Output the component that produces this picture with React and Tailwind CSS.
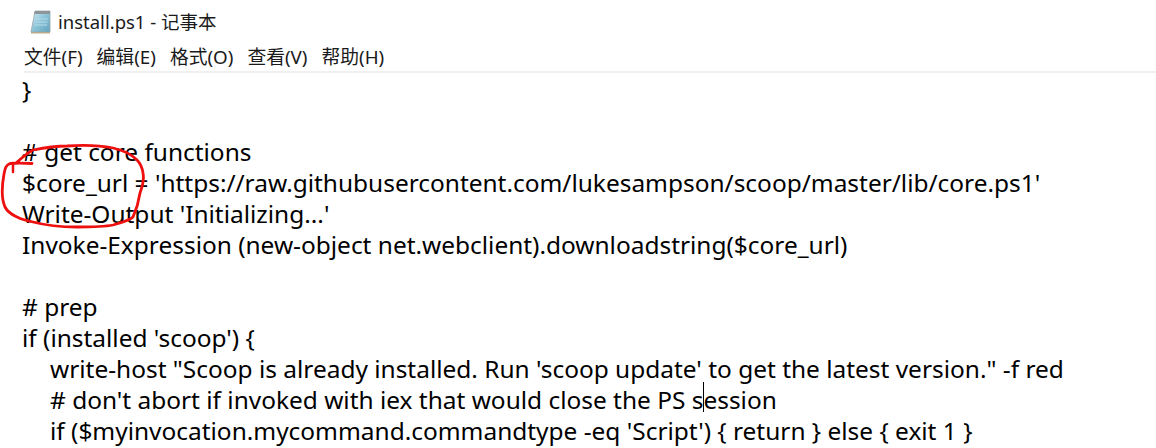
const font = { fontFamily: '"Noto Sans", "Noto Sans CJK SC", sans-serif' }

const menus = ["文件(F)", "编辑(E)", "格式(O)", "查看(V)", "帮助(H)"]

function NotepadIcon() {
  return (
    <svg width="24" height="24" viewBox="0 0 24 24">
      <defs>
        <linearGradient id="pad" x1="0" y1="0" x2="1" y2="1">
          <stop offset="0" stopColor="#d5ecf4" />
          <stop offset="0.5" stopColor="#8cc4d8" />
          <stop offset="1" stopColor="#5fa3bd" />
        </linearGradient>
      </defs>
      <path d="M6 1h15v21H2z" fill="url(#pad)" stroke="#9aa6aa" strokeWidth="0.8" />
      <path d="M6 1h15v3H5z" fill="#8d9598" />
      <path d="M7 9h12M6.500 12h12M6 15h12" stroke="#b6dbe8" strokeWidth="1" />
      <path d="M2 22h19v1.500H2z" fill="#b9a98c" />
    </svg>
  )
}

export default function App() {
  return (
    <div style={font} className="w-[1156px] h-[448px] overflow-hidden bg-white text-black relative">

      {/* title bar */}
      <div className="h-[44px] flex items-center pl-[29px] gap-[5px]">
        <NotepadIcon />
        <span className="text-[18.5px] text-[#1a1a1a]">install.ps1 - 记事本</span>
      </div>

      {/* menu */}
      <div className="h-[29px] ml-[24px] flex items-center gap-[14px] text-[18.8px] text-[#1a1a1a] border-b-2 border-[#f0f0f0]">
        {menus.map((m) => (
          <span key={m}>{m}</span>
        ))}
      </div>

      {/* editor */}
      <div className="pl-[22px] pt-[1px] text-[24.45px] leading-[31px] whitespace-pre">
        <div>{"}"}</div>
        <div>{" "}</div>
        <div># get core functions</div>
        <div>$core_url = 'https://raw.githubusercontent.com/lukesampson/scoop/master/lib/core.ps1'</div>
        <div>Write-Output 'Initializing...'</div>
        <div>Invoke-Expression (new-object net.webclient).downloadstring($core_url)</div>
        <div>{" "}</div>
        <div># prep</div>
        <div>if (installed 'scoop') {"{"}</div>
        <div className="pl-[28px]">write-host "Scoop is already installed. Run 'scoop update' to get the latest version." -f red</div>
        <div className="pl-[28px]">
          # don't abort if invoked with iex that would close the PS s
          <span className="relative">
            <span className="absolute left-0 top-[-1px] h-[30px] border-l border-black" />
          </span>
          ession
        </div>
        <div className="pl-[28px]">if ($myinvocation.mycommand.commandtype -eq 'Script') {"{"} return {"}"} else {"{"} exit 1 {"}"}</div>
      </div>

      {/* red marker circle */}
      <svg className="absolute left-0 top-[130px]" width="150" height="110" viewBox="0 0 150 110" fill="none">
        <path
          d="M32 33.500 C 24 33 15 33 10 33.500 C 6 35 5 38 4 44 C 2 55 1 68 5 77 C 8 83 13 85 17 87 C 23 90 28 91 33 92 C 48 96 62 97 77 97 C 90 97 103 97 113 95 C 124 92 130 90 133 87 C 137 78 139 70 140 63 C 143 55 144 48 143 43 C 142 36 139 32 137 30 C 130 23 122 20 113 18 C 98 15 82 15 67 16 C 54 16 43 18 33 20 C 27 23 22 28 17 32"
          stroke="#ee0f0f"
          strokeWidth="2.800"
          strokeLinecap="round"
          strokeLinejoin="round"
        />
        <path d="M13 33 L 13 42" stroke="#ee0f0f" strokeWidth="2.500" strokeLinecap="round" />
      </svg>
    </div>
  )
}
